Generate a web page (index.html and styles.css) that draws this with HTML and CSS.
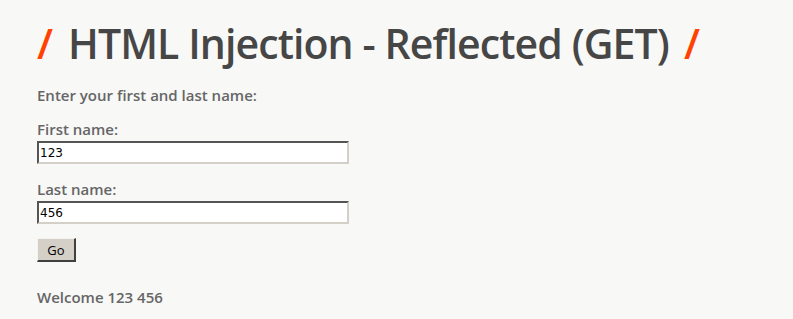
FILE: index.html
```html
<!DOCTYPE html>
<html>
<head>
<meta charset="utf-8">
<link rel="stylesheet" href="styles.css">
</head>
<body>
<div class="page">
  <h1 class="title"><span class="slash">/</span><span class="title-text">HTML Injection - Reflected (GET)</span><span class="slash">/</span></h1>
  <p class="intro">Enter your first and last name:</p>
  <form class="form">
    <label class="label" for="firstname">First name:</label>
    <input class="field" type="text" id="firstname" value="123">
    <label class="label" for="lastname">Last name:</label>
    <input class="field" type="text" id="lastname" value="456">
    <button class="go" type="button">Go</button>
  </form>
  <p class="welcome">Welcome 123 456</p>
</div>
</body>
</html>
```
FILE: styles.css
```css
html, body {
  margin: 0;
  padding: 0;
  background: #f8f8f7;
}
body {
  font-family: "Open Sans", "Noto Sans", sans-serif;
  color: #666;
}
.page {
  padding: 18px 0 0 37px;
}
.title {
  margin: 0;
  display: flex;
  align-items: baseline;
  gap: 15px;
  font-size: 41px;
  font-weight: 600;
  letter-spacing: -0.9px;
  color: #464646;
  line-height: 50px;
}
.slash {
  color: #ff4200;
  font-weight: 600;
  letter-spacing: 0;
}
.intro {
  margin: 17px 0 0 0;
  font-size: 15px;
  line-height: 20px;
  font-weight: 600;
}
.form {
  display: flex;
  flex-direction: column;
  align-items: flex-start;
  margin-top: 14px;
}
.label {
  font-size: 15px;
  font-weight: 600;
  line-height: 20px;
  margin-bottom: 2px;
}
.field {
  box-sizing: border-box;
  width: 312px;
  height: 23px;
  margin: 0 0 15px 0;
  padding: 0 1px;
  border-style: solid;
  border-width: 2px;
  border-top-color: #555;
  border-left-color: #555;
  border-bottom-color: #d4d0c8;
  border-right-color: #d4d0c8;
  background: #fff;
  font-family: "DejaVu Sans", sans-serif;
  font-size: 12px;
  color: #000;
}
.field:last-of-type {
  margin-bottom: 14px;
}
.go {
  box-sizing: border-box;
  width: 39px;
  height: 24px;
  background: #d4d0c8;
  border-style: solid;
  border-width: 1px 2px 2px 1px;
  border-top-color: #f4f2ee;
  border-left-color: #f4f2ee;
  border-bottom-color: #404040;
  border-right-color: #404040;
  font-family: "Open Sans", sans-serif;
  font-size: 13px;
  color: #000;
  padding: 0;
}
.welcome {
  margin: 25px 0 0 0;
  font-size: 15px;
  line-height: 20px;
  font-weight: 600;
}
```
